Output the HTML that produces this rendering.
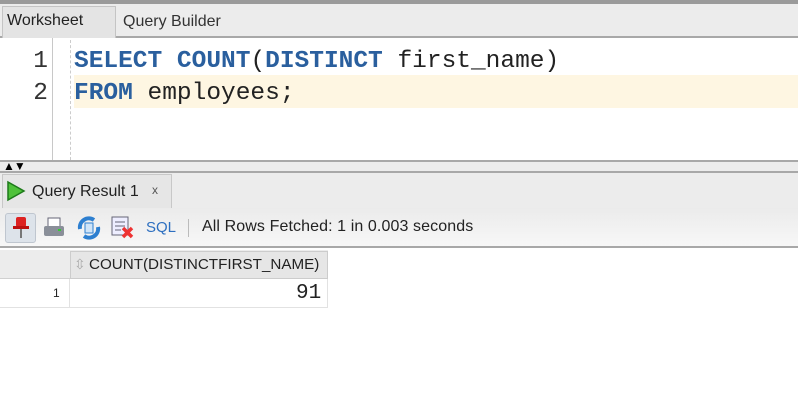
<!DOCTYPE html>
<html><head><style>
body{margin:0;width:798px;height:411px;overflow:hidden;background:#fff;font-family:"Liberation Sans",sans-serif;position:relative}
div{position:absolute;box-sizing:border-box}
.mono{font-family:"Liberation Mono",monospace;font-size:24.5px;white-space:pre}
.kw{color:#2a5f9e;font-weight:bold}
</style></head><body>
<div style="left:0;top:0;width:798px;height:38px;background:#ececec;border-top:4px solid #9a9a9a;border-bottom:2px solid #a8a8a8"></div>
<div style="left:2px;top:6px;width:114px;height:32px;background:#e4e4e4;border:1px solid #c4c4c4;border-bottom:none;font-size:16px;padding:5px 0 0 4px;color:#222">Worksheet</div>
<div style="left:123px;top:13px;font-size:16px;color:#333">Query Builder</div>
<div style="left:0;top:38px;width:798px;height:123px;background:#fff"></div>
<div style="left:52px;top:38px;width:1px;height:123px;background:#c8c8c8"></div>
<div style="left:70px;top:40px;width:0;height:120px;border-left:1px dashed #ccc"></div>
<div style="left:74px;top:75px;width:724px;height:33px;background:#fef6e2"></div>
<div class="mono" style="left:0;top:46px;width:48px;text-align:right;color:#333;line-height:32px">1<br>2</div>
<div class="mono" style="left:74px;top:46px;line-height:32px;color:#222"><span class="kw">SELECT COUNT</span>(<span class="kw">DISTINCT</span> first_name)
<span class="kw">FROM</span> employees;</div>
<div style="left:0;top:160px;width:798px;height:13px;background:#ececec;border-top:2px solid #a8a8a8;border-bottom:2px solid #a8a8a8"></div>
<div style="left:3px;top:161px;font-size:12px;line-height:10px;color:#000;letter-spacing:-1px">▲▼</div>
<div style="left:0;top:173px;width:798px;height:35px;background:#ececec"></div>
<div style="left:2px;top:174px;width:170px;height:34px;background:#e6e6e6;border:1px solid #c8c8c8;border-bottom:none"></div>
<svg style="position:absolute;left:6px;top:180px" width="20" height="22"><polygon points="2,2 18,11 2,20" fill="#4fc23a" stroke="#1d7a1a" stroke-width="1.5"/></svg>
<div style="left:32px;top:183px;font-size:16px;color:#222">Query Result 1</div>
<div style="left:152px;top:183px;font-size:12px;color:#555">x</div>
<div style="left:0;top:208px;width:798px;height:40px;background:linear-gradient(#ebebeb,#f7f7f7);border-bottom:2px solid #a8a8a8"></div>
<div style="left:5px;top:213px;width:31px;height:30px;background:#dde3ea;border:1px solid #bfc6cf;border-radius:3px"></div>
<svg style="position:absolute;left:10px;top:215px" width="22" height="26"><rect x="6" y="2" width="10" height="10" rx="2" fill="#d22"/><rect x="3" y="11" width="16" height="3" fill="#b11"/><rect x="10" y="14" width="2" height="9" fill="#777"/></svg>
<svg style="position:absolute;left:42px;top:216px" width="24" height="22"><rect x="6" y="2" width="12" height="9" fill="#fff" stroke="#667"/><rect x="2" y="10" width="20" height="10" rx="2" fill="#8a8f99"/><rect x="16" y="13" width="3" height="2" fill="#3c3"/></svg>
<svg style="position:absolute;left:76px;top:215px" width="26" height="26"><path d="M4 14a9 9 0 0 1 14-9M22 12a9 9 0 0 1-14 9" stroke="#2d7fd0" stroke-width="4" fill="none"/><rect x="9" y="8" width="8" height="10" fill="#cfe4f8" stroke="#2d7fd0"/></svg>
<svg style="position:absolute;left:110px;top:215px" width="26" height="26"><rect x="2" y="2" width="16" height="18" fill="#eef" stroke="#667"/><path d="M5 7h10M5 11h10M5 15h6" stroke="#667"/><path d="M13 13l9 9M22 13l-9 9" stroke="#e33" stroke-width="3.5"/></svg>
<div style="left:146px;top:219px;font-size:15px;color:#2d6fc0">SQL</div>
<div style="left:188px;top:219px;width:1px;height:18px;background:#bbb"></div>
<div style="left:202px;top:218px;font-size:16px;color:#222;letter-spacing:0.1px">All Rows Fetched: 1 in 0.003 seconds</div>
<div style="left:0;top:250px;width:798px;height:161px;background:#fff"></div>
<div style="left:0;top:250px;width:328px;height:29px;background:#ececec;border-bottom:1px solid #d0d0d0"></div>
<div style="left:70px;top:251px;width:258px;height:28px;background:#e6e6e6;border:1px solid #ccc"></div>
<div style="left:74px;top:256px;font-size:14px;color:#aaa">⇳</div>
<div style="left:89px;top:256px;font-size:15.2px;color:#222">COUNT(DISTINCTFIRST_NAME)</div>
<div style="left:0;top:279px;width:328px;height:29px;border-bottom:1px solid #e2e2e2"></div>
<div style="left:69px;top:279px;width:1px;height:29px;background:#e2e2e2"></div>
<div style="left:327px;top:279px;width:1px;height:29px;background:#e2e2e2"></div>
<div style="left:53px;top:286px;font-size:12px;color:#222">1</div>
<div class="mono" style="left:296px;top:282px;font-size:21px;color:#222">91</div>
</body></html>
